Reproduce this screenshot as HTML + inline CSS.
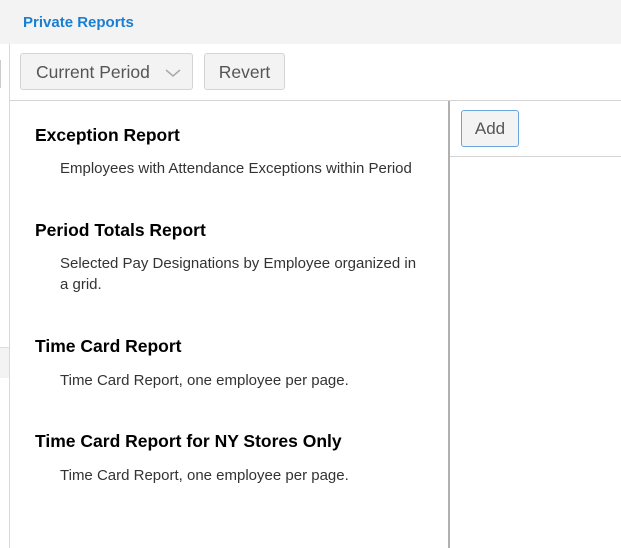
<!DOCTYPE html>
<html><head><style>
body{margin:0;width:621px;height:548px;position:relative;font-family:"Liberation Sans",Arial,sans-serif;background:#fff;overflow:hidden}
.hdr{position:absolute;left:0;top:0;width:621px;height:44px;background:#f3f3f3}
.hdr span{position:absolute;left:23px;top:14px;font-size:15px;font-weight:bold;color:#1a7fd0}
.vl{position:absolute;left:9px;top:44px;width:1px;height:504px;background:#d8d8d8}
.btn{position:absolute;top:53px;height:37px;border:1px solid #d4d4d4;border-radius:3px;background:#f3f3f3;color:#555;font-size:17.5px;line-height:37px;box-sizing:border-box}
.hl{position:absolute;left:10px;top:100px;width:611px;height:1px;background:#d4d4d4}
.div{position:absolute;left:448px;top:101px;width:2px;height:447px;background:#b0b0b0}
.add{position:absolute;left:461px;top:110px;width:58px;height:37px;border:1px solid #6aa5dc;border-radius:3px;background:#f3f3f3;color:#555;font-size:17px;line-height:35px;text-align:center;box-sizing:border-box}
.hl2{position:absolute;left:450px;top:156px;width:171px;height:1px;background:#d4d4d4}
h3{position:absolute;left:35px;margin:0;font-size:17.5px;font-weight:bold;color:#000}
p{position:absolute;left:60px;margin:0;font-size:15px;color:#333;line-height:21px;width:362px}
</style></head><body>
<div class="hdr"><span>Private Reports</span></div>
<div class="vl"></div>
<div style="position:absolute;left:0;top:60px;width:1px;height:28px;background:#ccc"></div>
<div style="position:absolute;left:0;top:347px;width:9px;height:30px;background:#f3f3f3;border-top:1px solid #ddd"></div>
<div class="btn" style="left:20px;width:173px;padding-left:15px">Current Period
<svg style="position:absolute;left:144px;top:14px" width="16" height="10"><path d="M1 2 L8 8 L15 2" fill="none" stroke="#aaa" stroke-width="1.5"/></svg></div>
<div class="btn" style="left:204px;width:81px;text-align:center">Revert</div>
<div class="hl"></div>
<div class="div"></div>
<div class="add">Add</div>
<div class="hl2"></div>
<h3 style="top:125px">Exception Report</h3>
<p style="top:158px">Employees with Attendance Exceptions within Period</p>
<h3 style="top:220px">Period Totals Report</h3>
<p style="top:253px">Selected Pay Designations by Employee organized in a grid.</p>
<h3 style="top:336px">Time Card Report</h3>
<p style="top:370px">Time Card Report, one employee per page.</p>
<h3 style="top:431px">Time Card Report for NY Stores Only</h3>
<p style="top:465px">Time Card Report, one employee per page.</p>
</body></html>
